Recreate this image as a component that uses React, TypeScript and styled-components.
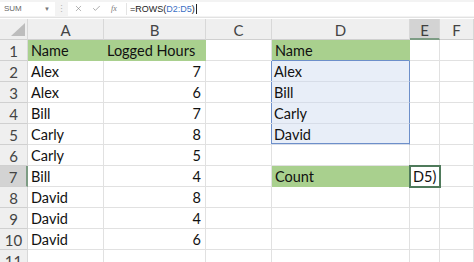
import React from 'react'
import styled, { createGlobalStyle, css } from 'styled-components'
import { X, Check } from 'lucide-react'

const GlobalStyle = createGlobalStyle`
  html, body {
    margin: 0;
    padding: 0;
    background: #ffffff;
    overflow: hidden;
  }
  body {
    font-family: Lato, 'Liberation Sans', sans-serif;
  }
`

const Page = styled.div`
  width: 474px;
  height: 262px;
  overflow: hidden;
  background: #ffffff;
`

const FormulaBar = styled.div`
  display: flex;
  align-items: center;
  height: 18px;
  background: #f3f3f3;
  border-bottom: 1px solid #e2e2e2;
  margin-bottom: 1px;
  box-sizing: border-box;
  padding: 2px 0 2px 0;
`

const NameBox = styled.div`
  display: flex;
  align-items: center;
  justify-content: space-between;
  width: 55px;
  height: 14px;
  background: #ffffff;
  box-sizing: border-box;
  padding: 0 5px 0 4px;
  font-size: 8px;
  color: #666;
  font-family: 'Liberation Sans', sans-serif;
`

const Caret = styled.span`
  font-size: 6px;
  color: #777;
`

const Dots = styled.div`
  width: 13px;
  text-align: center;
  color: #b5b5b5;
  font-size: 9px;
  line-height: 1;
`

const InputArea = styled.div`
  flex: 1;
  display: flex;
  align-items: center;
  height: 14px;
  background: #ffffff;
`

const IconSlot = styled.div`
  width: 18px;
  display: flex;
  justify-content: center;
  align-items: center;
  color: #777;
  &:first-child {
    margin-left: 1px;
  }
`

const Fx = styled.span`
  font-family: 'Liberation Serif', serif;
  font-style: italic;
  font-size: 8px;
  color: #777;
`

const Divider = styled.div`
  width: 1px;
  height: 12px;
  background: #e4e4e4;
  margin: 0 3px 0 3px;
`

const FormulaText = styled.div`
  font-family: 'Liberation Sans', sans-serif;
  font-size: 9px;
  color: #222;
  display: flex;
  align-items: center;
`

const Ref = styled.span`
  color: #3b6fc4;
`

const Cursor = styled.span`
  display: inline-block;
  width: 1px;
  height: 10px;
  background: #222;
  margin-left: 1px;
`

const Sheet = styled.div`
  display: grid;
  grid-template-columns: 28px 76px 102px 66px 138px 30px 1fr;
  grid-template-rows: 21px;
  grid-auto-rows: 21px;
  margin-top: 1px;
`

const headerBase = css`
  box-sizing: border-box;
  display: flex;
  align-items: center;
  justify-content: center;
  background: #efefef;
  color: #444;
  font-size: 15px;
  border-right: 1px solid #d8d8d8;
  border-bottom: 1px solid #d0d0d0;
`

const Corner = styled.div`
  ${headerBase};
  justify-content: flex-end;
  align-items: flex-end;
  padding: 0 2px 3px 0;
`

const ColHeader = styled.div<{ $active?: boolean }>`
  ${headerBase};
  padding-top: 2px;
  ${(p) =>
    p.$active &&
    css`
      background: #d3d3d3;
      color: #3f3f3f;
      border-bottom: 2px solid #7d9c84;
    `}
`

const RowHeader = styled.div<{ $active?: boolean }>`
  ${headerBase};
  padding-top: 2px;
  ${(p) =>
    p.$active &&
    css`
      background: #d3d3d3;
      border-right: 2px solid #7d9c84;
    `}
`

type Fill = 'none' | 'green' | 'range'

const Cell = styled.div<{
  $fill?: Fill
  $right?: boolean
  $rangeTop?: boolean
  $rangeBottom?: boolean
  $active?: boolean
}>`
  position: relative;
  box-sizing: border-box;
  display: flex;
  align-items: flex-end;
  justify-content: ${(p) => (p.$right ? 'flex-end' : 'flex-start')};
  padding: 0 ${(p) => (p.$right ? '4px' : '3px')} 0 3px;
  font-size: 14.5px;
  line-height: 19px;
  color: #111;
  white-space: nowrap;
  border-right: 1px solid #e1e1e1;
  border-bottom: 1px solid #e1e1e1;
  ${(p) =>
    p.$fill === 'green' &&
    css`
      background: #a9d08e;
      border-right-color: #a9d08e;
      border-bottom-color: #a9d08e;
    `}
  ${(p) =>
    p.$fill === 'range' &&
    css`
      background: #e8eef8;
      border-bottom-color: #d7dde8;
      border-right-color: #6d8fca;
      box-shadow: inset 1px 0 0 #6d8fca
        ${p.$rangeBottom ? ', inset 0 -1px 0 #6d8fca' : ''};
      margin-left: -1px;
    `}
  ${(p) =>
    p.$rangeTop &&
    css`
      border-bottom-color: #6d8fca;
    `}
  ${(p) =>
    p.$active &&
    css`
      outline: 2px solid #4f7a5b;
      outline-offset: -1px;
      z-index: 1;
      background: #ffffff;
    `}
`

type CellData = {
  text?: string
  fill?: Fill
  right?: boolean
}

const colA = ['Name', 'Alex', 'Alex', 'Bill', 'Carly', 'Carly', 'Bill', 'David', 'David', 'David', '']
const colB = ['Logged Hours', '7', '6', '7', '8', '5', '4', '8', '4', '6', '']
const colD = ['Name', 'Alex', 'Bill', 'Carly', 'David', '', 'Count', '', '', '', '']

const columns = ['A', 'B', 'C', 'D', 'E', 'F']

const CornerMark = () => (
  <svg width="14" height="13" viewBox="0 0 14 13">
    <polygon points="14,0 14,13 0,13" fill="#bdbdbd" />
  </svg>
)

const App: React.FC = () => {
  const rows = colA.map((_, i) => {
    const r = i + 1
    const cells: CellData[] = [
      { text: colA[i], fill: r === 1 ? 'green' : 'none' },
      { text: colB[i], fill: r === 1 ? 'green' : 'none', right: r > 1 },
      { text: '' },
      {
        text: colD[i],
        fill: r === 1 || r === 7 ? 'green' : r >= 2 && r <= 5 ? 'range' : 'none'
      },
      { text: r === 7 ? 'D5)' : '' },
      { text: '' }
    ]
    return { r, cells }
  })

  return (
    <Page>
      <GlobalStyle />
      <FormulaBar>
        <NameBox>
          SUM
          <Caret>▼</Caret>
        </NameBox>
        <Dots>⋮</Dots>
        <InputArea>
          <IconSlot>
            <X size={9} strokeWidth={1.4} />
          </IconSlot>
          <IconSlot>
            <Check size={9} strokeWidth={1.6} />
          </IconSlot>
          <IconSlot>
            <Fx>fx</Fx>
          </IconSlot>
          <Divider />
          <FormulaText>
            =ROWS(<Ref>D2:D5</Ref>)<Cursor />
          </FormulaText>
        </InputArea>
      </FormulaBar>
      <Sheet>
        <Corner>
          <CornerMark />
        </Corner>
        {columns.map((c) => (
          <ColHeader key={c} $active={c === 'E'}>
            {c}
          </ColHeader>
        ))}
        {rows.map(({ r, cells }) => (
          <React.Fragment key={r}>
            <RowHeader $active={r === 7}>{r}</RowHeader>
            {cells.map((c, j) => (
              <Cell
                key={j}
                $fill={c.fill}
                $right={c.right}
                $rangeTop={j === 3 && r === 1}
                $rangeBottom={j === 3 && r === 5}
                $active={j === 4 && r === 7}
              >
                {c.text}
              </Cell>
            ))}
          </React.Fragment>
        ))}
      </Sheet>
    </Page>
  )
}

export default App
